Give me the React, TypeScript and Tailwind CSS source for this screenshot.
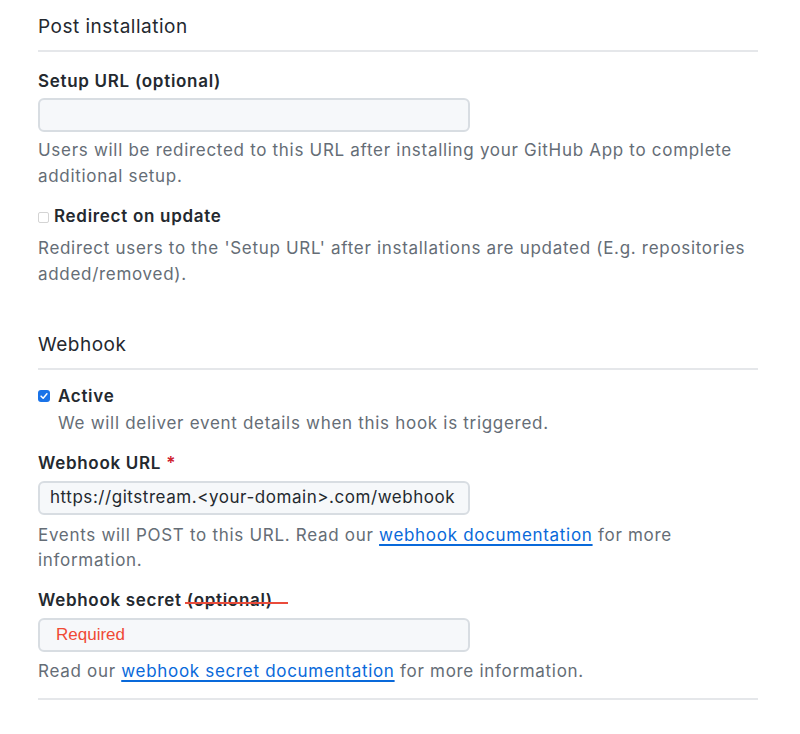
import React from "react"

const font = { fontFamily: "Inter, 'Noto Sans', 'Liberation Sans', sans-serif" }

const Heading = ({ children }: { children: React.ReactNode }) => (
  <div className="border-b-2 border-[#e5e7ea] pb-[9px]">
    <h2 className="text-[19px] leading-[28px] tracking-[0.5px] text-[#24292f]">{children}</h2>
  </div>
)

const Label = ({ children }: { children: React.ReactNode }) => (
  <div className="text-[17px] leading-[24px] font-semibold tracking-[0.7px] text-[#24292f]">{children}</div>
)

const Note = ({ children, className = "" }: { children: React.ReactNode; className?: string }) => (
  <p className={"text-[17px] leading-[25.5px] tracking-[0.7px] text-[#656d76] " + className}>{children}</p>
)

const Field = ({ children, className = "mt-[6px]" }: { children?: React.ReactNode; className?: string }) => (
  <div
    className={
      "flex h-[34px] w-[432px] items-center whitespace-nowrap rounded-[6px] border-2 border-[#d8dde2] bg-[#f6f8fa] px-[10px] text-[17px] tracking-[0.55px] text-[#24292f] " +
      className
    }
  >
    {children}
  </div>
)

const Link = ({ children }: { children: React.ReactNode }) => (
  <a className="text-[#0969da] underline decoration-[1.5px] underline-offset-[3px]">{children}</a>
)

export default function App() {
  return (
    <div className="min-h-[734px] bg-white" style={font}>
      <div className="ml-[38px] w-[720px] pt-[13px]">
        <Heading>Post installation</Heading>

        <div className="mt-[17px]">
          <Label>Setup URL (optional)</Label>
          <Field className="mt-[5px]" />
          <Note className="mt-[6px]">
            Users will be redirected to this URL after installing your GitHub App to complete additional setup.
          </Note>
        </div>

        <div className="mt-[15px]">
          <div className="flex items-center gap-[5px]">
            <span className="mt-[3px] h-[11px] w-[11px] rounded-[2px] border border-[#d4d4d4] bg-white" />
            <Label>Redirect on update</Label>
          </div>
          <Note className="mt-[8px]">
            Redirect users to the 'Setup URL' after installations are updated (E.g. repositories added/removed).
          </Note>
        </div>

        <div className="mt-[44px]">
          <Heading>Webhook</Heading>
        </div>

        <div className="mt-[14px]">
          <div className="flex items-center gap-[8px]">
            <span className="flex h-[12px] w-[12px] items-center justify-center rounded-[3px] bg-[#1a73e8]">
              <svg viewBox="0 0 12 12" className="h-[10px] w-[10px]">
                <path d="M2.5 6.2 L5 8.6 L9.5 3.4" fill="none" stroke="white" strokeWidth="1.8" strokeLinecap="round" strokeLinejoin="round" />
              </svg>
            </span>
            <Label>Active</Label>
          </div>
          <Note className="ml-[20px] mt-[3px]">We will deliver event details when this hook is triggered.</Note>
        </div>

        <div className="mt-[14px]">
          <Label>
            Webhook URL <span className="text-[#cf222e]">*</span>
          </Label>
          <Field>https://gitstream.&lt;your-domain&gt;.com/webhook</Field>
          <Note className="mt-[8px]">
            <span>Events will POST to this URL. Read our </span>
            <Link>webhook documentation</Link>
            <span> for more</span>
            <br />
            <span>information.</span>
          </Note>
        </div>

        <div className="mt-[14px]">
          <Label>
            Webhook secret{" "}
            <span className="relative">
              (optional)
              <span className="absolute left-[-2px] top-[12px] h-[2px] w-[103px] bg-[#ea4b3b]" />
            </span>
          </Label>
          <Field>
            <span className="ml-[6px] tracking-normal text-[#f04a35]" style={{ fontFamily: "'Liberation Sans', sans-serif" }}>
              Required
            </span>
          </Field>
          <Note className="mt-[7px]">
            Read our <Link>webhook secret documentation</Link> for more information.
          </Note>
        </div>

        <div className="mt-[14px] border-b-2 border-[#e5e7ea]" />
      </div>
    </div>
  )
}
